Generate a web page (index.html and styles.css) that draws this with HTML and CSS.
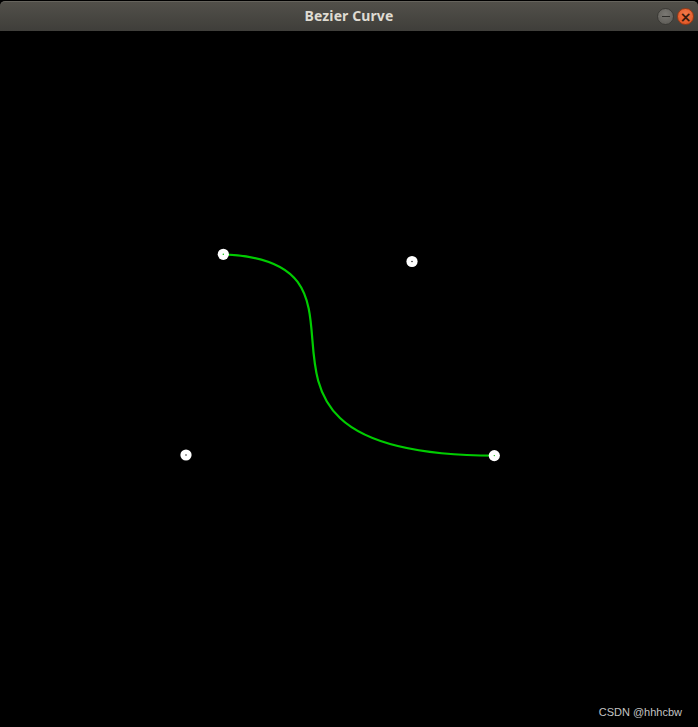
FILE: index.html
```html
<!DOCTYPE html>
<html>
<head>
<meta charset="utf-8">
<link rel="stylesheet" href="styles.css">
</head>
<body>
<div class="window">
  <div class="titlebar">
    <span class="title">Bezier Curve</span>
    <div class="controls">
      <span class="btn btn-min"><span class="dash"></span></span>
      <span class="btn btn-close">×</span>
    </div>
  </div>
  <div class="canvas">
    <svg class="plot" width="698" height="696" viewBox="0 31 698 696">
      <path d="M223.3 254.3 C412 261.5 186 455.3 494.3 455.6" fill="none" stroke="#00cc00" stroke-width="2.2"/>
      <circle cx="223.3" cy="254.3" r="5.6" fill="#fff"/>
      <circle cx="223.3" cy="254.3" r="0.7" fill="#00c000"/>
      <circle cx="412" cy="261.5" r="5.6" fill="#fff"/>
      <circle cx="412" cy="261.5" r="0.7" fill="#000"/>
      <circle cx="186" cy="455" r="5.6" fill="#fff"/>
      <circle cx="186" cy="455" r="0.7" fill="#000"/>
      <circle cx="494.3" cy="455.6" r="5.6" fill="#fff"/>
      <circle cx="494.3" cy="455.6" r="0.7" fill="#00c000"/>
    </svg>
    <span class="watermark">CSDN @hhhcbw</span>
  </div>
</div>
</body>
</html>
```

FILE: styles.css
```css
html, body {
  margin: 0;
  padding: 0;
  background: #000;
}
.window {
  width: 698px;
  height: 727px;
  display: flex;
  flex-direction: column;
  background: #000;
  overflow: hidden;
}
.titlebar {
  height: 30px;
  margin-top: 1px;
  flex: none;
  position: relative;
  display: flex;
  align-items: center;
  justify-content: center;
  background: linear-gradient(#52504a, #3f3e3a);
  border-top: 1px solid #66645d;
  box-sizing: border-box;
  border-radius: 5px 5px 0 0;
}
.title {
  font-family: "Noto Sans", "DejaVu Sans", sans-serif;
  font-weight: bold;
  font-size: 14px;
  line-height: 1;
  margin-top: -2px;
  color: #dfdbd2;
  letter-spacing: 0.1px;
}
.controls {
  position: absolute;
  right: 4px;
  top: 6px;
  display: flex;
  gap: 3px;
}
.btn {
  width: 17px;
  height: 17px;
  border-radius: 50%;
  display: flex;
  align-items: center;
  justify-content: center;
  box-sizing: border-box;
}
.btn-min {
  background: radial-gradient(circle at 50% 35%, #7a7873, #5a5853);
  border: 1px solid #3a3935;
}
.dash {
  width: 8px;
  height: 1.5px;
  background: #2e2d2a;
}
.btn-close {
  background: radial-gradient(circle at 50% 35%, #f47a4b, #df4f1d);
  border: 1px solid #9c3a14;
  color: #3a1a0c;
  font-family: "DejaVu Sans", sans-serif;
  font-size: 14px;
  font-weight: bold;
  line-height: 1;
}
.canvas {
  flex: 1;
  position: relative;
  background: #000;
}
.plot {
  display: block;
}
.watermark {
  position: absolute;
  right: 16px;
  bottom: 9px;
  font-family: "Liberation Sans", Arial, sans-serif;
  font-size: 11px;
  color: #c4c4c4;
}
```
